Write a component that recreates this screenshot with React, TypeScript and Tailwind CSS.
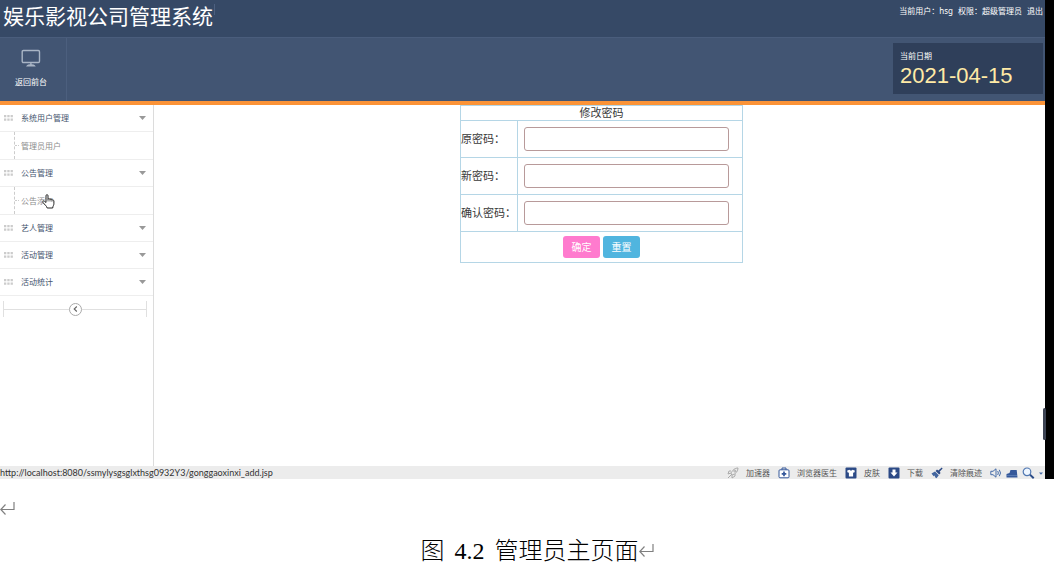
import type { ReactNode } from 'react'

type MenuGroup = {
  title: string
  children: string[]
}

const MENU: MenuGroup[] = [
  { title: '系统用户管理', children: ['管理员用户'] },
  { title: '公告管理', children: ['公告添加'] },
  { title: '艺人管理', children: [] },
  { title: '活动管理', children: [] },
  { title: '活动统计', children: [] },
]

const FIELDS = [
  { id: 'old-password', label: '原密码：' },
  { id: 'new-password', label: '新密码：' },
  { id: 'confirm-password', label: '确认密码：' },
]

export default function App() {
  return (
    <div className="w-full bg-white text-[#393939] font-['Noto_Sans','Noto_Sans_CJK_SC',sans-serif]">
      <div className="bg-black pr-[9px]">
        <div className="relative bg-white">
          <Header />
          <div className="flex min-h-[361px]">
            <Sidebar />
            <main className="flex-1 flex justify-center items-start pl-1">
              <PasswordForm />
            </main>
          </div>
          <StatusBar />
          {/* scrollbar thumb */}
          <div className="absolute -right-px bottom-[39px] h-8 w-[3px] rounded-sm bg-[#3c4353]" />
        </div>
      </div>

      {/* ── CAPTION ── */}
      <div className="pt-[22px]">
        <ReturnMark />
      </div>
      <div className="flex items-center justify-center pl-5 pt-4">
        <p className="flex items-baseline gap-[10px] text-2xl leading-9 font-light text-black">
          <span>图</span>
          <span className="font-['Liberation_Serif',serif]">4.2</span>
          <span>管理员主页面</span>
        </p>
        <ReturnMark />
      </div>
    </div>
  )
}

function Header() {
  return (
    <header className="border-b-4 border-[#fb9337] text-white">
      {/* ── TITLE STRIP ── */}
      <div className="flex h-[37px] items-start justify-between bg-[#364966] pl-[3px] pr-[2px]">
        <div className="flex items-start gap-px">
          <h1 className="pt-[2px] text-[21px] leading-7">娱乐影视公司管理系统</h1>
          <span className="mt-1 h-[11px] w-px bg-[#4d6080]" />
        </div>
        <div className="flex gap-[5px] pt-1 text-[8px] leading-[14px]">
          <span>当前用户：hsg</span>
          <span>权限：超级管理员</span>
          <a href="#logout">退出</a>
        </div>
      </div>

      {/* ── TOOLBAR ── */}
      <div className="flex h-16 items-start justify-between border-t border-[#4a5d7c] bg-[#425573] pr-[2px]">
        <a href="#home" className="flex h-full w-[67px] flex-col items-center gap-[7px] border-r border-[#4c5f7e] pr-1 pt-[11px] text-[8px] leading-[14px]">
          <svg width="20" height="19" viewBox="0 0 20 19" fill="none" stroke="#a9b5c5" strokeWidth="1.4">
            <rect x="1.2" y="1.5" width="17.3" height="12" rx="1.2" />
            <path d="M9.9 13.5v3M6.5 16.8c.8-1 1.5-.8 3.4-.8s2.6-.2 3.4.8z" />
          </svg>
          <span>返回前台</span>
        </a>
        <div className="mt-[5px] h-[51px] w-[150px] bg-[#2f3f5a] pl-[7px] pt-[6px]">
          <div className="text-[8px] leading-[14px]">当前日期</div>
          <div className="text-[22px] leading-[26px] text-[#ffeaa6] font-['Liberation_Sans',sans-serif]">2021-04-15</div>
        </div>
      </div>
    </header>
  )
}

function Sidebar() {
  return (
    <aside className="w-[154px] shrink-0 border-r border-[#dcdcdc] text-[8px]">
      <nav>
        <ul>
          {MENU.map(group => (
            <li key={group.title}>
              <button className="flex h-[27px] w-full items-center border-b border-[#eeeeee] pl-1 pr-[7px] text-[#44546e]">
                <GridIcon />
                <span className="ml-2 flex-1 text-left">{group.title}</span>
                <svg width="7" height="4" viewBox="0 0 7 4" fill="#999999">
                  <path d="M0 0h7L3.5 4z" />
                </svg>
              </button>
              {group.children.map(child => (
                <div key={child} className="flex h-7 items-center border-b border-[#eeeeee] pl-[14px]">
                  <span className="h-full border-l border-dashed border-[#cccccc]" />
                  <span className="w-1 border-t border-dotted border-[#cccccc]" />
                  <a href="#item" className="relative ml-[2px] text-[#8c8c8c]">
                    {child}
                    {child === '公告添加' && <HandCursor />}
                  </a>
                </div>
              ))}
            </li>
          ))}
        </ul>
      </nav>
      {/* ── COLLAPSE BAR ── */}
      <div className="mt-[5px] flex h-4 items-center border-x border-[#e0e0e0] ml-[3px] mr-[6px]">
        <span className="h-px flex-1 bg-[#e0e0e0]" />
        <button aria-label="collapse" className="flex size-[13px] items-center justify-center rounded-full border border-[#aaaaaa] bg-white">
          <svg width="5" height="6" viewBox="0 0 5 6" fill="none" stroke="#666666" strokeWidth="1.1">
            <path d="M3.8.5 1.2 3l2.6 2.5" />
          </svg>
        </button>
        <span className="h-px flex-1 bg-[#e0e0e0]" />
      </div>
    </aside>
  )
}

function PasswordForm() {
  return (
    <form onSubmit={e => e.preventDefault()}>
      <table className="w-[283px] border-collapse text-[11px] leading-[14px]">
        <tbody>
          <tr>
            <td colSpan={2} className="h-[15px] border border-[#b5d6e6] p-0 text-center">修改密码</td>
          </tr>
          {FIELDS.map(field => (
            <tr key={field.id}>
              <td className="h-[37px] w-[57px] whitespace-nowrap border border-[#b5d6e6] p-0">
                <label htmlFor={field.id}>{field.label}</label>
              </td>
              <td className="border border-[#b5d6e6] py-0 pl-[6px] pr-[13px]">
                <input
                  id={field.id}
                  type="password"
                  className="block h-6 w-full rounded-[3px] border border-[#b89a9a] bg-white px-1"
                />
              </td>
            </tr>
          ))}
          <tr>
            <td colSpan={2} className="h-[31px] border border-[#b5d6e6] p-0">
              <div className="flex justify-center gap-[3px] text-[10px] text-white">
                <button type="submit" className="h-[22px] w-[37px] rounded-[3px] bg-[#ff7bce]">确定</button>
                <button type="reset" className="h-[22px] w-[37px] rounded-[3px] bg-[#50b5df]">重置</button>
              </div>
            </td>
          </tr>
        </tbody>
      </table>
    </form>
  )
}

function StatusBar() {
  return (
    <footer className="flex h-[13px] items-center justify-between bg-[#ececec] pr-[2px] text-[#555555]">
      <span className="pt-px text-[9px] leading-3 text-[#333333] font-['Lato',sans-serif]">
        http://localhost:8080/ssmylysgsglxthsg0932Y3/gonggaoxinxi_add.jsp
      </span>
      <div className="flex items-center gap-2 pt-px text-[8px] leading-3">
        <StatusItem label="加速器">
          <g fill="none" stroke="#aaaaaa">
            <path d="M4 7C5 3 8 1 11 1c0 3-2 6-6 7zM4 4H2L1 7l3-1M5 8v3l3-2V7M1 11l3-3" />
            <circle cx="7.8" cy="4" r="1" />
          </g>
        </StatusItem>
        <StatusItem label="浏览器医生">
          <path d="M4 3V1h4v2" fill="none" stroke="#35589a" />
          <rect x="1" y="2.8" width="10" height="8" rx="1" fill="#ffffff" stroke="#35589a" />
          <path d="M6 4.6v4.6M3.7 6.9h4.6" stroke="#35589a" strokeWidth="1.7" />
        </StatusItem>
        <StatusItem label="皮肤">
          <rect x=".5" y=".5" width="11" height="11" rx="1" fill="#2c4a86" />
          <path d="M4.3 2.7 6 3.8l1.7-1.1 2.3 1-.9 2-1-.3v4H3.9v-4l-1 .3-.9-2z" fill="#ffffff" />
        </StatusItem>
        <StatusItem label="下载">
          <rect x=".5" y=".5" width="11" height="11" rx="1" fill="#2c4a86" />
          <path d="M4.5 2.5h3v3h2L6 9.5 2.5 5.5h2z" fill="#ffffff" />
        </StatusItem>
        <StatusItem label="清除痕迹">
          <path d="m10.8.6.8.8-3 3.4 1 1.2-1.4 1.5-3.6-3.6L6 2.4l1.3 1z" fill="#2c4a86" />
          <path d="M4 4.4 7.8 8.2 5.5 11.2 3.8 10l.3-1.4-1.5.6L.5 6.6z" fill="#42659f" />
        </StatusItem>
        <div className="flex items-center gap-1">
          <svg width="12" height="12" viewBox="0 0 12 12" fill="none" stroke="#466ca8">
            <path d="M.8 4.3H3L6 1.8v8.4L3 7.7H.8zM7.7 4q1.3 2 0 4M9.3 2.8q2.4 3.2 0 6.4" />
          </svg>
          <svg width="12" height="12" viewBox="0 0 12 12">
            <path d="M.5 10.5V7l3-1 1-3h6.2l.8 7.5z" fill="#35589a" />
            <path d="M1 8.5h10" stroke="#6f91c4" strokeWidth=".6" />
          </svg>
          <svg width="13" height="12" viewBox="0 0 13 12" fill="none">
            <circle cx="5" cy="4.8" r="3.8" fill="#eef6ff" stroke="#5077b1" strokeWidth="1.2" />
            <path d="m8 7.6 3.7 3.7" stroke="#294b87" strokeWidth="2" />
          </svg>
          <svg width="4" height="3" viewBox="0 0 4 3" fill="#466ca8">
            <path d="M0 .5h4L2 2.8z" />
          </svg>
        </div>
      </div>
    </footer>
  )
}

function StatusItem({ label, children }: { label: string; children: ReactNode }) {
  return (
    <button className="flex items-center gap-[7px]">
      <svg width="12" height="12" viewBox="0 0 12 12">{children}</svg>
      <span>{label}</span>
    </button>
  )
}

function GridIcon() {
  return (
    <svg width="9" height="6" viewBox="0 0 9 6" fill="#cccccc">
      <path d="M0 0h2.3v2.3H0zM3.3 0h2.3v2.3H3.3zM6.6 0h2.3v2.3H6.6zM0 3.5h2.3v2.3H0zM3.3 3.5h2.3v2.3H3.3zM6.6 3.5h2.3v2.3H6.6z" />
    </svg>
  )
}

function HandCursor() {
  return (
    <svg className="absolute -top-px left-[21px]" width="13" height="15" viewBox="0 0 13 15" fill="#ffffff" stroke="#222222" strokeLinejoin="round">
      <path d="M4 8.5V1.7C4 .3 6 .3 6 1.7v3.6c.3-.8 1.9-.6 2 .3.4-.7 1.8-.4 1.9.5.7-.6 2-.1 2 .9v2.8c0 1.5-1 2-1.2 4.2H5.2C4.7 12 2.5 10.5 1 8.5.2 7.2 1.6 6.3 2.6 7.3z" />
      <path d="M6 5.3v2.2M8 5.7v1.8M9.9 6.2v1.5" strokeWidth=".7" />
    </svg>
  )
}

function ReturnMark() {
  return (
    <svg width="15" height="15" viewBox="0 0 15 15" fill="none" stroke="#808080" strokeWidth="1.2">
      <path d="M14 1v7.5H1M5.5 3.5.8 8.5l4.7 5" />
    </svg>
  )
}
